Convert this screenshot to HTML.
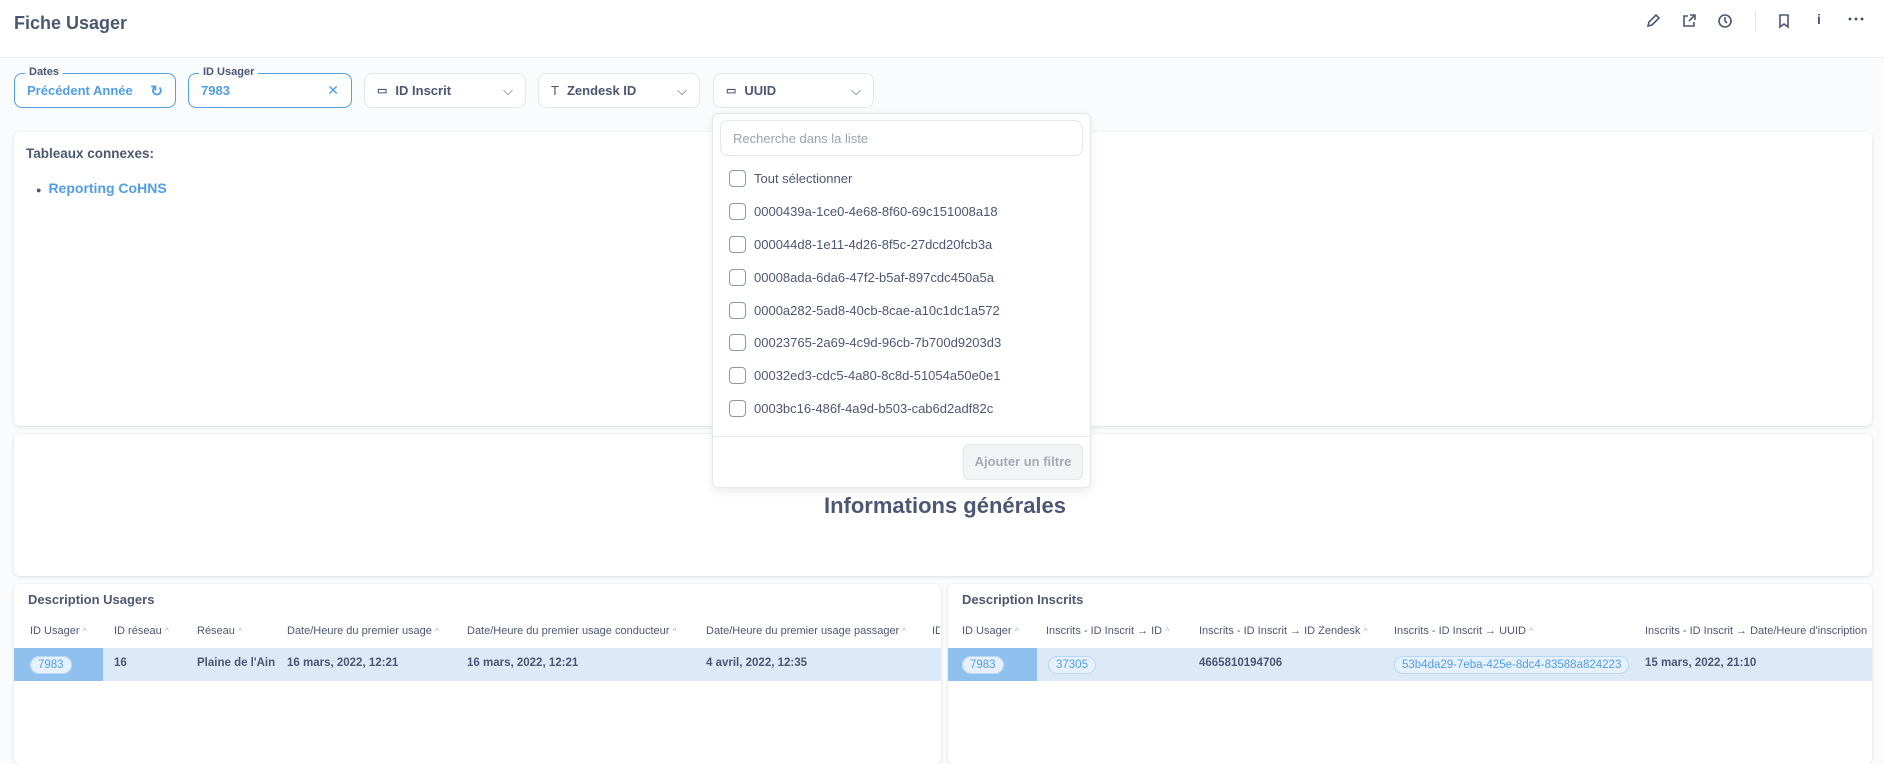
<!DOCTYPE html>
<html><head><meta charset="utf-8"><style>
*{box-sizing:border-box;margin:0;padding:0}
body{width:1884px;height:748px;overflow:hidden;background:#f9fbfc;font-family:"Liberation Sans",sans-serif;color:#4c5773;position:relative}
.abs{position:absolute}
.hdr{left:0;top:0;width:1884px;height:58px;background:#fff;border-bottom:1px solid #eceff2}
.title{left:14px;top:13px;font-size:18px;font-weight:bold;color:#4c5773}
.ic{top:12px;width:18px;height:18px}
.f{top:73px;height:35px;border:1px solid #e3e7ea;border-radius:8px;background:#fff;font-size:13px;font-weight:bold;display:flex;align-items:center;padding:0 12px}
.f.a{border-color:#509ee3;color:#509ee3}
.lab{position:absolute;top:-8px;left:10px;background:#f9fbfc;padding:0 4px;font-size:11px;color:#4c5773;font-weight:bold}
.card{background:#fff;border-radius:6px;box-shadow:0 1px 3px rgba(0,0,0,.12)}
.cb{width:17px;height:17px;border:1.5px solid #8f97a6;border-radius:4px}
.it{left:754px;font-size:13px;color:#4c5773}
.th{top:625px;font-size:11px;color:#4c5773;white-space:nowrap}
.td{top:657px;font-size:11.5px;font-weight:bold;color:#4c5773;white-space:nowrap}
.pill{border:1px solid #b9d7f3;border-radius:10px;padding:2px 7px;color:#509ee3;font-weight:normal;background:#e6f1fb}
.ar{color:#b0b7c0;font-size:9px}
</style></head><body>
<div class="abs hdr"></div>
<div class="abs title">Fiche Usager</div>
<svg class="abs ic" style="left:1644px" viewBox="0 0 18 18" fill="none" stroke="#4c5773" stroke-width="1.6"><path d="M4 14l1-4 7-7 3 3-7 7z"/></svg>
<svg class="abs ic" style="left:1680px" viewBox="0 0 18 18" fill="none" stroke="#4c5773" stroke-width="1.6"><path d="M8 4H4v10h10v-4M10 3h5v5M15 3l-6 6"/></svg>
<svg class="abs ic" style="left:1716px" viewBox="0 0 18 18" fill="none" stroke="#4c5773" stroke-width="1.6"><circle cx="9" cy="9" r="6"/><path d="M9 5v4l2 2"/></svg>
<div class="abs" style="left:1755px;top:10px;width:1px;height:22px;background:#e3e7ea"></div>
<svg class="abs ic" style="left:1775px" viewBox="0 0 18 18" fill="none" stroke="#4c5773" stroke-width="1.6"><path d="M5 3h8v12l-4-3-4 3z"/></svg>
<div class="abs" style="left:1817px;top:11px;font-size:14px;font-weight:bold">i</div>
<svg class="abs" style="left:1848px;top:17px" width="16" height="4" viewBox="0 0 16 4" fill="#4c5773"><circle cx="2" cy="2" r="1.5"/><circle cx="8" cy="2" r="1.5"/><circle cx="14" cy="2" r="1.5"/></svg>

<div class="abs f a" style="left:14px;width:162px"><span class="lab">Dates</span>Précédent Année<span style="margin-left:auto;font-size:15px">↻</span></div>
<div class="abs f a" style="left:188px;width:164px"><span class="lab">ID Usager</span>7983<span style="margin-left:auto;font-size:14px;font-weight:normal">✕</span></div>
<div class="abs f" style="left:364px;width:162px"><span style="font-size:11px;margin-right:8px">▭</span>ID Inscrit<span style="margin-left:auto;font-weight:normal">⌵</span></div>
<div class="abs f" style="left:538px;width:162px"><span style="margin-right:8px;font-weight:normal">T</span>Zendesk ID<span style="margin-left:auto;font-weight:normal">⌵</span></div>
<div class="abs f" style="left:713px;width:161px"><span style="font-size:11px;margin-right:8px">▭</span>UUID<span style="margin-left:auto;font-weight:normal">⌵</span></div>

<div class="abs card" style="left:14px;top:132px;width:1858px;height:294px"></div>
<div class="abs" style="left:26px;top:146px;font-size:13.5px;font-weight:bold">Tableaux connexes:</div>
<div class="abs" style="left:36px;top:180px;font-size:14px;font-weight:bold;color:#509ee3"><span style="color:#4c5773;font-size:9px;margin-right:7px">●</span>Reporting CoHNS</div>

<div class="abs card" style="left:14px;top:434px;width:1858px;height:142px"></div>
<div class="abs" style="left:0;width:1890px;text-align:center;top:493px;font-size:22px;font-weight:bold">Informations générales</div>

<div class="abs card" style="left:14px;top:584px;width:927px;height:180px"></div>
<div class="abs card" style="left:948px;top:584px;width:924px;height:180px"></div>
<div class="abs" style="left:28px;top:592px;font-size:13px;font-weight:bold">Description Usagers</div>
<div class="abs" style="left:962px;top:592px;font-size:13px;font-weight:bold">Description Inscrits</div>
<div class="abs" style="left:14px;top:648px;width:927px;height:33px;background:#dceaf7"></div>
<div class="abs" style="left:14px;top:648px;width:89px;height:33px;background:#8fc0ee"></div>
<div class="abs" style="left:948px;top:648px;width:924px;height:33px;background:#dceaf7"></div>
<div class="abs" style="left:948px;top:648px;width:89px;height:33px;background:#8fc0ee"></div>

<div class="abs th" style="left:30px">ID Usager <span class="ar">^</span></div>
<div class="abs th" style="left:114px">ID réseau <span class="ar">^</span></div>
<div class="abs th" style="left:197px">Réseau <span class="ar">^</span></div>
<div class="abs th" style="left:287px">Date/Heure du premier usage <span class="ar">^</span></div>
<div class="abs th" style="left:467px">Date/Heure du premier usage conducteur <span class="ar">^</span></div>
<div class="abs th" style="left:706px">Date/Heure du premier usage passager <span class="ar">^</span></div>
<div class="abs th" style="left:932px;width:8px;overflow:hidden">ID</div>
<div class="abs td" style="left:30px;top:659px"><span class="pill">7983</span></div>
<div class="abs td" style="left:114px">16</div>
<div class="abs td" style="left:197px">Plaine de l'Ain</div>
<div class="abs td" style="left:287px">16 mars, 2022, 12:21</div>
<div class="abs td" style="left:467px">16 mars, 2022, 12:21</div>
<div class="abs td" style="left:706px">4 avril, 2022, 12:35</div>

<div class="abs th" style="left:962px">ID Usager <span class="ar">^</span></div>
<div class="abs th" style="left:1046px">Inscrits - ID Inscrit → ID <span class="ar">^</span></div>
<div class="abs th" style="left:1199px">Inscrits - ID Inscrit → ID Zendesk <span class="ar">^</span></div>
<div class="abs th" style="left:1394px">Inscrits - ID Inscrit → UUID <span class="ar">^</span></div>
<div class="abs th" style="left:1645px">Inscrits - ID Inscrit → Date/Heure d'inscription</div>
<div class="abs td" style="left:962px;top:659px"><span class="pill">7983</span></div>
<div class="abs td" style="left:1048px;top:659px"><span class="pill">37305</span></div>
<div class="abs td" style="left:1199px">4665810194706</div>
<div class="abs td" style="left:1394px;top:659px"><span class="pill">53b4da29-7eba-425e-8dc4-83588a824223</span></div>
<div class="abs td" style="left:1645px">15 mars, 2022, 21:10</div>

<div class="abs card" style="left:712px;top:113px;width:379px;height:375px;border:1px solid #e3e7ea;box-shadow:0 4px 10px rgba(0,0,0,.08)"></div>
<div class="abs" style="left:720px;top:120px;width:363px;height:36px;border:1px solid #e3e7ea;border-radius:8px;font-size:13px;color:#9aa3af;padding:10px 12px">Recherche dans la liste</div>
<div class="abs cb" style="left:729px;top:170px"></div><div class="abs it" style="top:171px">Tout sélectionner</div>
<div class="abs cb" style="left:729px;top:203px"></div><div class="abs it" style="top:204px">0000439a-1ce0-4e68-8f60-69c151008a18</div>
<div class="abs cb" style="left:729px;top:236px"></div><div class="abs it" style="top:237px">000044d8-1e11-4d26-8f5c-27dcd20fcb3a</div>
<div class="abs cb" style="left:729px;top:269px"></div><div class="abs it" style="top:270px">00008ada-6da6-47f2-b5af-897cdc450a5a</div>
<div class="abs cb" style="left:729px;top:302px"></div><div class="abs it" style="top:303px">0000a282-5ad8-40cb-8cae-a10c1dc1a572</div>
<div class="abs cb" style="left:729px;top:334px"></div><div class="abs it" style="top:335px">00023765-2a69-4c9d-96cb-7b700d9203d3</div>
<div class="abs cb" style="left:729px;top:367px"></div><div class="abs it" style="top:368px">00032ed3-cdc5-4a80-8c8d-51054a50e0e1</div>
<div class="abs cb" style="left:729px;top:400px"></div><div class="abs it" style="top:401px">0003bc16-486f-4a9d-b503-cab6d2adf82c</div>
<div class="abs" style="left:713px;top:436px;width:377px;height:1px;background:#e3e7ea"></div>
<div class="abs" style="left:963px;top:444px;width:120px;height:36px;background:#f3f4f6;border:1px solid #e3e7ea;border-radius:6px;font-size:13px;font-weight:bold;color:#a4abb6;text-align:center;line-height:34px">Ajouter un filtre</div>
</body></html>
